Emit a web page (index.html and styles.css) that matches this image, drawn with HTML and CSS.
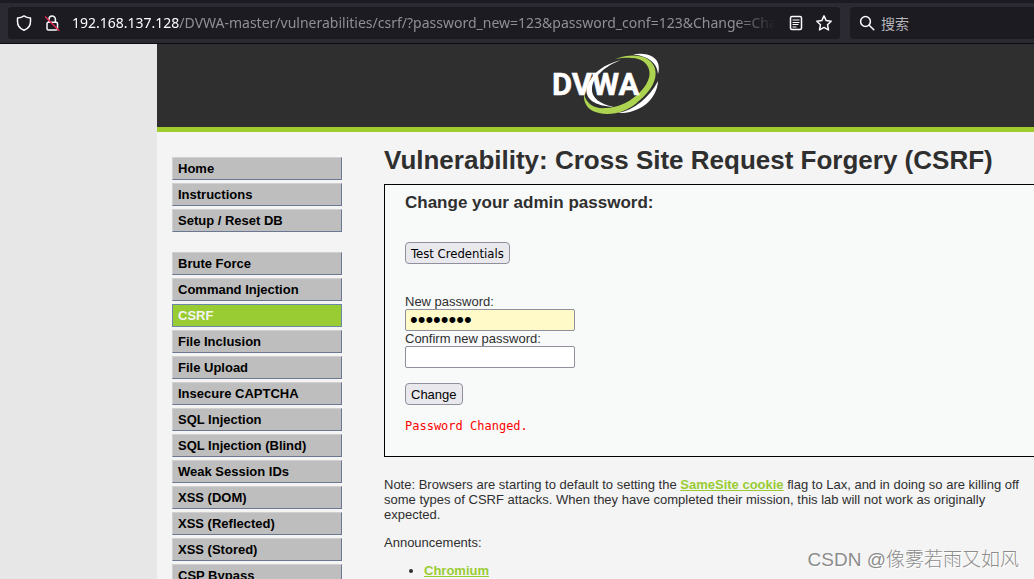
FILE: index.html
```html
<!DOCTYPE html>
<html lang="en">
<head>
    <meta charset="utf-8">
    <meta name="viewport" content="width=device-width, initial-scale=1">
    <title>Vulnerability: Cross Site Request Forgery (CSRF)</title>
    <link rel="stylesheet" href="styles.css">
</head>
<body>

<div class="toolbar">
    <div class="urlbar">
        <svg class="icon" viewBox="0 0 16 16" width="16" height="16"><path d="M8 .9C6.2 2.300 4 2.900 1.500 3.100v3.400c0 4 2.600 7.400 6.500 8.800 3.900-1.400 6.500-4.800 6.500-8.800V3.100C12 2.900 9.800 2.300 8 .9z"/></svg>
        <svg class="icon" viewBox="0 0 16 16" width="16" height="16"><rect x="3" y="7.200" width="10.500" height="7.800" rx="1.500"/><path d="M5 7V4.200a3.200 3.200 0 0 1 6.400 0V7"/><path class="strike" d="M1.500 2L15 15.500"/></svg>
        <a class="address" href="#"><span class="host">192.168.137.128</span>/DVWA-master/vulnerabilities/csrf/?password_new=123&amp;password_conf=123&amp;Change=Change#</a>
        <svg class="icon" viewBox="0 0 16 16" width="16" height="16"><rect x="2.500" y="1.500" width="11" height="13" rx="1.500"/><path d="M5 5h6M5 7.500h6M5 9.500h5M5 12h3" stroke-width="1.200"/></svg>
        <svg class="icon" viewBox="0 0 16 16" width="16" height="16"><path d="M8 .9l2.200 4.700 5 .6-3.700 3.500 1 5.200L8 12.400l-4.500 2.500 1-5.200L.8 6.200l5-.6z"/></svg>
    </div>
    <div class="searchbar">
        <svg class="icon" viewBox="0 0 16 16" width="16" height="16"><circle cx="6.500" cy="6.500" r="4.900"/><path d="M10.200 10.200l4.600 4.600"/></svg>
        <input type="text" placeholder="搜索" aria-label="搜索">
    </div>
</div>

<div class="page">
    <div class="container">
        <div class="header">
            <svg class="logo" viewBox="0 0 114 64" width="114" height="64">
                <path class="white" d="M71 9C55 13 41 22 37 36c-3 12 8 19 27 20C50 53 41 47 42 37 43 26 55 15 71 9z"/>
                <path class="green" d="M65 8C84 1 99 5 104 15c5 11-2 24-14 34C77 62 60 65 49 62 38 60 33 52 34 43c3 11 11 15 22 14 10 0 22-5 31-13 11-10 15-20 11-28C94 7 82 5 65 8z"/>
                <path class="white" d="M83 3.500C97 1 107 6 108.500 14c.5 3 .5 6-.5 9C107 12 99 5 83 3.500zM108 30c-1 19-19 33-40 32 16-3 31-15 40-32z"/>
                <text x="2" y="44">DVWA</text>
            </svg>
        </div>

        <div class="columns">
            <div class="menu">
                <ul>
                    <li><a href="#">Home</a></li>
                    <li><a href="#">Instructions</a></li>
                    <li><a href="#">Setup / Reset DB</a></li>
                </ul>
                <ul>
                    <li><a href="#">Brute Force</a></li>
                    <li><a href="#">Command Injection</a></li>
                    <li class="selected"><a href="#">CSRF</a></li>
                    <li><a href="#">File Inclusion</a></li>
                    <li><a href="#">File Upload</a></li>
                    <li><a href="#">Insecure CAPTCHA</a></li>
                    <li><a href="#">SQL Injection</a></li>
                    <li><a href="#">SQL Injection (Blind)</a></li>
                    <li><a href="#">Weak Session IDs</a></li>
                    <li><a href="#">XSS (DOM)</a></li>
                    <li><a href="#">XSS (Reflected)</a></li>
                    <li><a href="#">XSS (Stored)</a></li>
                    <li><a href="#">CSP Bypass</a></li>
                </ul>
            </div>

            <div class="body">
                <h1>Vulnerability: Cross Site Request Forgery (CSRF)</h1>
                <div class="vulnerable">
                    <h3>Change your admin password:</h3>
                    <button class="test" type="button">Test Credentials</button>
                    <form action="#" method="get">
                        <label for="password_new">New password:</label>
                        <input class="filled" type="password" id="password_new" name="password_new" value="password" autocomplete="off">
                        <label for="password_conf">Confirm new password:</label>
                        <input type="password" id="password_conf" name="password_conf" autocomplete="off">
                        <button type="submit" name="Change">Change</button>
                    </form>
                    <pre>Password Changed.</pre>
                </div>
                <p>Note: Browsers are starting to default to setting the <a href="#">SameSite cookie</a> flag to Lax, and in doing so are killing off some types of CSRF attacks. When they have completed their mission, this lab will not work as originally expected.</p>
                <p>Announcements:</p>
                <ul>
                    <li><a href="#">Chromium</a></li>
                </ul>
            </div>
        </div>
    </div>
</div>

<div class="watermark">CSDN @像雾若雨又如风</div>

</body>
</html>
```
FILE: styles.css
```css
* {
    box-sizing: border-box;
}

body {
    margin: 0;
    height: 100vh;
    overflow: hidden;
    display: flex;
    flex-direction: column;
    position: relative;
    background: #e7e7e7;
    color: #2f2f2f;
    font: 13px/15px "Liberation Sans", Arial, sans-serif;
}

/* browser toolbar */
.toolbar {
    flex: none;
    display: flex;
    gap: 10px;
    height: 44px;
    padding: 4px 0 4px 8px;
    background: #2b2a33;
    border-top: 3px solid #1c1b22;
    border-bottom: 1px solid #0c0c0d;
    font-family: "Noto Sans", "Noto Sans CJK SC", sans-serif;
    font-size: 14px;
}

.urlbar,
.searchbar {
    display: flex;
    align-items: center;
    min-width: 0;
    background: #1c1b22;
}

.urlbar {
    flex: 1;
    gap: 12px;
    padding: 0 8px;
    border-radius: 4px;
}

.searchbar {
    flex: 0 0 184px;
    gap: 2px;
    padding-left: 9px;
    border-radius: 4px 0 0 4px;
}

.searchbar input {
    flex: 1;
    min-width: 0;
    padding: 0 4px;
    border: 0;
    background: none;
    color: #fbfbfe;
    font: 14px "Noto Sans CJK SC", sans-serif;
}

.searchbar input::placeholder {
    color: #b5b5ba;
}

.icon {
    flex: none;
    fill: none;
    stroke: #fbfbfe;
    stroke-width: 1.5;
    stroke-linejoin: round;
    stroke-linecap: round;
}

.icon .strike {
    stroke: #e22850;
}

.address {
    flex: 1;
    min-width: 0;
    overflow: hidden;
    white-space: nowrap;
    line-height: 20px;
    color: #8f8f96;
    text-decoration: none;
    mask-image: linear-gradient(to left, transparent, #000 40px);
}

.address .host {
    color: #fbfbfe;
}

/* page */
.page {
    flex: 1;
    min-height: 0;
    overflow: hidden;
    padding-left: 157px;
}

.container {
    min-width: 900px;
    min-height: 100%;
    background: #f4f4f4;
}

.header {
    display: flex;
    justify-content: center;
    padding: 7px 0 12px;
    background: #2f2f2f;
    border-bottom: 5px solid #a0cc30;
}

.logo text {
    font: bold 31px Roboto, "Liberation Sans", sans-serif;
    fill: #fff;
    stroke: #fff;
    stroke-width: 0.5;
}

.logo .white {
    fill: #fff;
}

.logo .green {
    fill: #acd450;
}

.columns {
    display: flex;
    gap: 42px;
    padding: 0 20px 0 15px;
}

.menu {
    flex: 0 0 170px;
    padding-top: 25px;
}

.menu ul {
    margin: 0 0 20px;
    padding: 0;
    list-style: none;
    display: flex;
    flex-direction: column;
    gap: 3px;
}

.menu li {
    padding: 3px 5px;
    background: #bebebe;
    border: 1px solid #d0d0d0;
    border-right-color: #6b7894;
    border-bottom-color: #6b7894;
}

.menu a {
    display: block;
    color: #000;
    font-weight: bold;
    text-decoration: none;
}

.menu .selected {
    background: #99cc33;
    border-color: #6b88a8;
}

.menu .selected a {
    color: #f4f4f4;
}

.body {
    flex: 1;
    min-width: 0;
    padding-top: 12px;
}

h1 {
    margin: 0 0 8px;
    font-size: 26px;
    line-height: 32px;
}

.vulnerable {
    padding: 8px 20px 22px;
    background: #f8fafa;
    border: 1px solid #000;
}

h3 {
    margin: 0 0 30px;
    font-size: 17px;
    line-height: 19px;
}

button {
    display: block;
    height: 22px;
    padding: 0 5px;
    background: #e9e9ed;
    border: 1px solid #8f8f9d;
    border-radius: 4px;
    color: #000;
    font: 13px "Liberation Sans", Arial, sans-serif;
}

.test {
    font-family: "DejaVu Sans Condensed", "Noto Sans", sans-serif;
}

form {
    display: flex;
    flex-direction: column;
    align-items: flex-start;
    margin-top: 30px;
}

form input {
    width: 170px;
    height: 22px;
    padding: 0 4px;
    background: #fff;
    border: 1px solid #8f8f9d;
    border-radius: 2px;
    color: #000;
    font: 22px "Liberation Sans", Arial, sans-serif;
}

form .filled {
    background: #fffac8;
}

form button {
    margin-top: 15px;
}

pre {
    margin: 14px 0 0;
    color: #f00;
    font: 12px/15px "DejaVu Sans Mono", monospace;
}

p {
    margin: 20px 0 0;
}

p + p {
    margin-top: 13px;
}

.body a {
    color: #99cc33;
    font-weight: bold;
}

.body ul {
    margin: 13px 0;
    padding-left: 40px;
}

.watermark {
    position: absolute;
    right: 15px;
    bottom: 7px;
    color: #8c8c8c;
    font: 19px/24px "Liberation Sans", "Noto Sans CJK SC", sans-serif;
    font-weight: 300;
    text-shadow: 1px 1px 0 #fff;
}
```
